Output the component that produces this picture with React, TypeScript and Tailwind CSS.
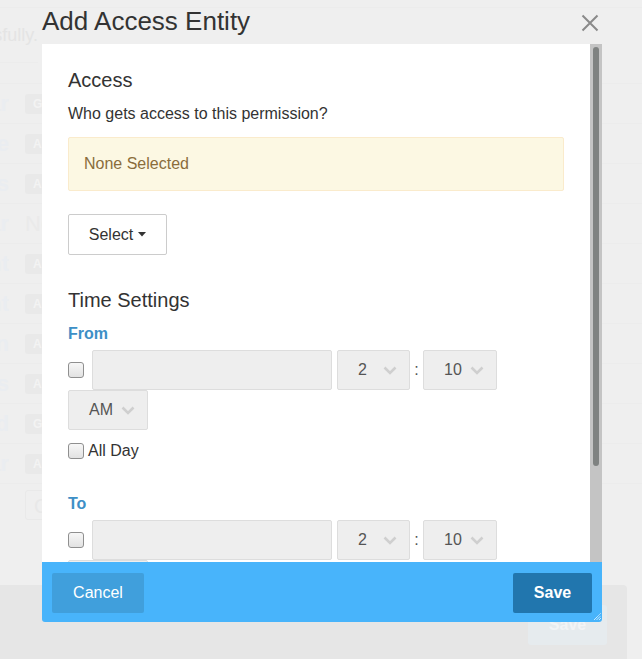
import React from 'react';

const bgRows = [
  { label: 'ar', badge: 'G' },
  { label: 'e', badge: 'A' },
  { label: 's', badge: 'A' },
  { label: 'ar', badge: '' },
  { label: 'nt', badge: 'A' },
  { label: 'nt', badge: 'A' },
  { label: 'n', badge: 'A' },
  { label: 's', badge: 'A' },
  { label: 'd', badge: 'G' },
  { label: 'ar', badge: 'A' },
];

const Chevron: React.FC = () => (
  <svg width="14" height="9" viewBox="0 0 14 9" className="shrink-0">
    <path d="M1.5 1.5 L7 7 L12.5 1.5" fill="none" stroke="#cfcfcf" strokeWidth="2.6" />
  </svg>
);

const SelectBox: React.FC<{ value: string; width: string }> = ({ value, width }) => (
  <div
    className={`${width} h-[40px] shrink-0 flex items-center justify-between pl-[20px] pr-[12px] bg-[#eeeeee] border border-[#dddddd] rounded-[2px] text-[16px] text-[#555555]`}
  >
    <span>{value}</span>
    <Chevron />
  </div>
);

const Checkbox: React.FC = () => (
  <div className="w-[16px] h-[16px] shrink-0 rounded-[3px] border border-[#8f8f8f] bg-gradient-to-b from-[#f7f7f7] to-[#e2e2e2]" />
);

const TimeRow: React.FC = () => (
  <div className="flex items-center">
    <Checkbox />
    <div className="ml-[8px] w-[240px] h-[40px] bg-[#eeeeee] border border-[#dddddd] rounded-[2px]" />
    <div className="ml-[5px]">
      <SelectBox value="2" width="w-[73px]" />
    </div>
    <span className="w-[13px] text-center text-[16px] text-[#555555]">:</span>
    <SelectBox value="10" width="w-[74px]" />
  </div>
);

const App: React.FC = () => {
  return (
    <div
      className="relative w-[642px] h-[659px] overflow-hidden bg-[#efefef] flex flex-col"
      style={{ fontFamily: '"Liberation Sans", Arial, sans-serif' }}
    >
      {/* faded page behind the dialog */}
      <div className="h-[8px] border-b border-[#ececec]" />
      <div className="h-[55px] flex items-center justify-end w-[38px] overflow-hidden whitespace-nowrap text-[18px] text-[#e4e4e4] border-b border-[#ececec]">
        <span>sfully.</span>
      </div>
      <div className="h-[20px]" />
      {bgRows.map((r, i) => (
        <div key={i} className="h-[40px] flex items-center border-t border-[#ececec]">
          <div className="w-[9px] flex justify-end overflow-hidden whitespace-nowrap text-[22px] font-bold text-[#eaedf1]">
            <span>{r.label}</span>
          </div>
          {r.badge ? (
            <span className="ml-[16px] w-[30px] h-[20px] rounded-[3px] bg-[#e9e9e9] text-[12px] font-bold text-[#f3f3f3] pl-[8px] flex items-center">
              {r.badge}
            </span>
          ) : (
            <span className="ml-[16px] text-[22px] text-[#eaeaea]">No</span>
          )}
        </div>
      ))}
      <div className="h-[44px] border-t border-[#ececec] pt-[6px] pl-[25px]">
        <div className="w-[40px] h-[30px] border border-[#e9e9e9] rounded-[3px] text-[20px] text-[#e8e8e8] pl-[8px]">C</div>
      </div>
      <div className="mt-auto h-[74px] w-[627px] bg-[#e6e6e6] rounded-tr-[4px] flex justify-end items-start pt-[20px] pr-[20px]">
        <div className="w-[79px] h-[40px] bg-[#e6ebee] rounded-[3px] flex items-center justify-center text-[16px] font-bold text-[#f2f4f6]">
          Save
        </div>
      </div>

      {/* dialog */}
      <div className="absolute left-[42px] top-0 w-[560px] h-[622px] flex flex-col">
        <div className="h-[44px] flex items-start justify-between">
          <h1 className="text-[26px] leading-[30px] text-[#333333] pt-[6px]">Add Access Entity</h1>
          <svg width="18" height="18" viewBox="0 0 18 18" className="mt-[14px] mr-[3px]">
            <path d="M1.5 1.5 L16.5 16.5 M16.5 1.5 L1.5 16.5" stroke="#8a8a8a" strokeWidth="2" />
          </svg>
        </div>
        <div className="flex h-[518px]">
          <div className="flex-1 bg-white overflow-hidden pl-[26px] pr-[26px] pt-[24px]">
            <h2 className="text-[20px] leading-[24px] text-[#333333]">Access</h2>
            <p className="mt-[11px] text-[16px] leading-[22px] text-[#333333]">Who gets access to this permission?</p>
            <div className="mt-[12px] h-[54px] flex items-center px-[15px] bg-[#fcf8e3] border border-[#faebcc] rounded-[2px] text-[16px] text-[#8a6d3b]">
              None Selected
            </div>
            <div className="mt-[23px] w-[99px] h-[41px] flex items-center justify-center gap-[5px] border border-[#cccccc] rounded-[2px] text-[16px] text-[#333333]">
              <span>Select</span>
              <svg width="8" height="5" viewBox="0 0 8 5">
                <path d="M0 0 H8 L4 4.5 Z" fill="#333333" />
              </svg>
            </div>
            <h2 className="mt-[33px] text-[20px] leading-[24px] text-[#333333]">Time Settings</h2>
            <div className="mt-[11px] text-[16px] leading-[22px] font-bold text-[#3d8fc6]">From</div>
            <div className="mt-[5px]">
              <TimeRow />
            </div>
            <SelectBox value="AM" width="w-[80px]" />
            <div className="mt-[10px] flex items-center gap-[4px]">
              <Checkbox />
              <span className="text-[16px] leading-[22px] text-[#333333]">All Day</span>
            </div>
            <div className="mt-[31px] text-[16px] leading-[22px] font-bold text-[#3d8fc6]">To</div>
            <div className="mt-[5px]">
              <TimeRow />
            </div>
            <SelectBox value="AM" width="w-[80px]" />
          </div>
          <div className="w-[12px] bg-[#c4c4c4] pt-[3px] px-[3px]">
            <div className="h-[419px] rounded-full bg-[#7f8281]" />
          </div>
        </div>
        <div className="relative h-[60px] bg-[#48b4fb] rounded-b-[3px] flex items-center justify-between px-[10px] pt-[1px]">
          <div className="w-[92px] h-[40px] rounded-[2px] bg-[#409fdc] flex items-center justify-center text-[16px] text-white">
            Cancel
          </div>
          <div className="w-[79px] h-[40px] rounded-[2px] bg-[#2176ae] flex items-center justify-center text-[16px] font-bold text-white">
            Save
          </div>
          <svg width="7" height="7" viewBox="0 0 7 7" className="absolute right-[1px] bottom-[2px]">
            <path d="M0 7 L7 0 M2.5 7 L7 2.5 M5 7 L7 5" stroke="#ffffff" strokeWidth="1" strokeDasharray="1 0.6" />
          </svg>
        </div>
      </div>
    </div>
  );
};

export default App;
